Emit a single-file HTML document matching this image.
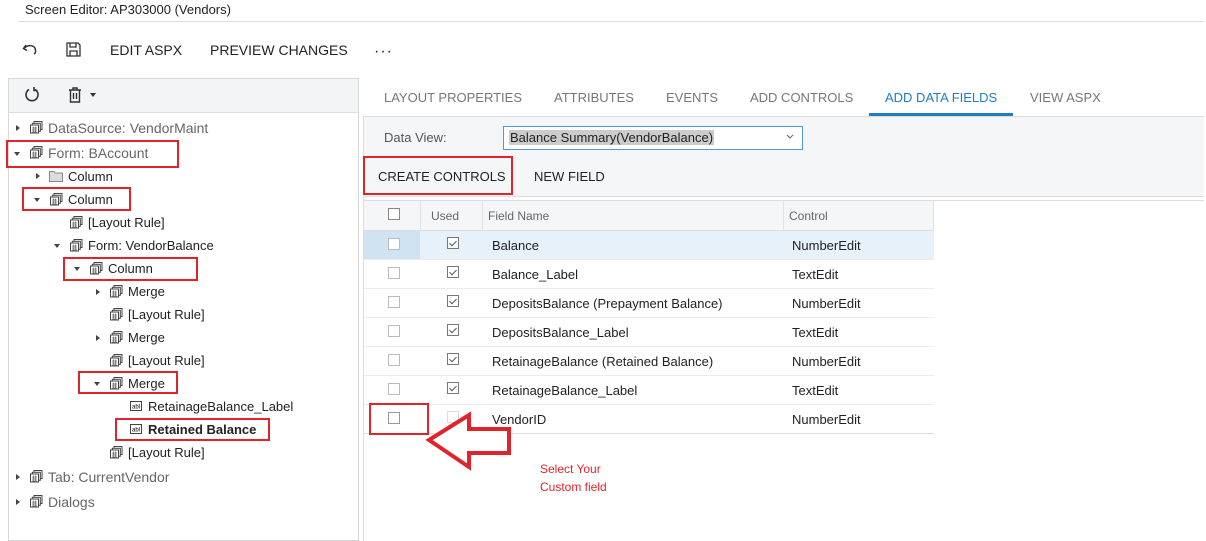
<!DOCTYPE html>
<html><head><meta charset="utf-8"><style>
*{margin:0;padding:0;box-sizing:border-box}
body{width:1206px;height:541px;background:#fff;font-family:"Liberation Sans",Arial,sans-serif;position:relative;overflow:hidden;color:#222}
.a{position:absolute;white-space:nowrap}
.red{position:absolute;border:2px solid #e0242b}
.t{font-size:13px;color:#222}
.tg{font-size:14px;color:#666}
.tab{position:absolute;top:90px;font-size:13px;color:#777}
.cb{position:absolute;width:12px;height:12px;border:1px solid #bbb;background:#fff}
.ck{position:absolute;width:12px;height:12px;border:1px solid #777;background:#fff}
.ck:after{content:"";position:absolute;left:3px;top:1px;width:3px;height:6px;border:solid #555;border-width:0 1.3px 1.3px 0;transform:rotate(45deg)}
.row{position:absolute;left:364px;width:570px;height:29px;border-bottom:1px solid #e8ecef;font-size:13px}
.tri{position:absolute;width:0;height:0}
.tr{border-top:3.5px solid transparent;border-bottom:3.5px solid transparent;border-left:4px solid #444}
.td{border-left:3.5px solid transparent;border-right:3.5px solid transparent;border-top:4px solid #444}
</style></head><body>
<div class="a" style="left:25px;top:2px;font-size:13px;color:#222">Screen Editor: AP303000 (Vendors)</div>
<div class="a" style="left:18px;top:21px;width:1186px;height:1px;background:#ddd"></div>
<svg class="a" style="left:22px;top:42px" width="16" height="14" viewBox="0 0 16 14"><path d="M4 3 L1.5 6.5 L5 8.5 M2 6.5 C6 2 13 3 13.5 8 C13.8 10 13 11.5 12 12" fill="none" stroke="#333" stroke-width="1.5"/></svg>
<svg class="a" style="left:66px;top:42px" width="15" height="15" viewBox="0 0 15 15"><path d="M1 1H12L14 3V14H1Z M4 1V5H10V1 M4 14V9H11V14" fill="none" stroke="#333" stroke-width="1.3"/></svg>
<div class="a" style="left:110px;top:42px;font-size:14px">EDIT ASPX</div>
<div class="a" style="left:210px;top:42px;font-size:14px">PREVIEW CHANGES</div>
<div class="a" style="left:374px;top:43px;font-size:16px;letter-spacing:1px">···</div>

<div class="a" style="left:8px;top:78px;width:351px;height:463px;border:1px solid #d8d8d8"></div>
<div class="a" style="left:9px;top:79px;width:349px;height:34px;background:#f3f4f5;border-bottom:1px solid #ddd"></div>
<svg class="a" style="left:24px;top:86px" width="16" height="17" viewBox="0 0 16 17"><path d="M5 3.5 A6 6 0 1 0 11 3.5 M10 1 V4.5 H13.5" fill="none" stroke="#333" stroke-width="1.6"/></svg>
<svg class="a" style="left:68px;top:87px" width="14" height="16" viewBox="0 0 14 16"><path d="M1 3H13 M5 3V1H9V3 M2.5 3V15H11.5V3 M5.5 6V12 M8.5 6V12" fill="none" stroke="#333" stroke-width="1.4"/></svg>
<div class="tri td" style="left:90px;top:93px;border-top-color:#333"></div>

<svg width="0" height="0" style="position:absolute"><defs><symbol id="w" viewBox="0 0 13 13"><rect x="4" y="0.5" width="8" height="8" fill="#fff" stroke="#444"/><rect x="2.3" y="2.3" width="8" height="8" fill="#fff" stroke="#444"/><rect x="0.5" y="4" width="8" height="8" fill="#fff" stroke="#444"/><path d="M2 7H7 M2 9H7 M2 11H7 M3.5 5.5V12 M5.5 5.5V12" stroke="#666" stroke-width="0.7"/></symbol>
<symbol id="b" viewBox="0 0 12 10"><rect x="0.5" y="0.5" width="11" height="9" fill="#fff" stroke="#444"/><text x="6" y="7.5" font-size="6" text-anchor="middle" font-family="Liberation Sans">abl</text></symbol></defs></svg>

<div class="tri tr" style="left:16px;top:125px"></div><svg class="a" style="left:30px;top:121px" width="13" height="13"><use href="#w"/></svg><div class="a tg" style="left:48px;top:120px">DataSource: VendorMaint</div>
<div class="tri td" style="left:14px;top:152px"></div><svg class="a" style="left:30px;top:146px" width="13" height="13"><use href="#w"/></svg><div class="a tg" style="left:48px;top:145px">Form: BAccount</div>
<div class="tri tr" style="left:36px;top:173px"></div><svg class="a" style="left:49px;top:170px" width="14" height="12" viewBox="0 0 14 12"><path d="M0.5 2V11.5H13.5V3H6L5 1.5H0.5Z" fill="#ddd" stroke="#888"/></svg><div class="a t" style="left:68px;top:169px">Column</div>
<div class="tri td" style="left:34px;top:198px"></div><svg class="a" style="left:50px;top:193px" width="13" height="13"><use href="#w"/></svg><div class="a t" style="left:68px;top:192px">Column</div>
<svg class="a" style="left:70px;top:216px" width="13" height="13"><use href="#w"/></svg><div class="a t" style="left:88px;top:215px">[Layout Rule]</div>
<div class="tri td" style="left:54px;top:244px"></div><svg class="a" style="left:70px;top:239px" width="13" height="13"><use href="#w"/></svg><div class="a t" style="left:88px;top:238px">Form: VendorBalance</div>
<div class="tri td" style="left:74px;top:267px"></div><svg class="a" style="left:90px;top:262px" width="13" height="13"><use href="#w"/></svg><div class="a t" style="left:108px;top:261px">Column</div>
<div class="tri tr" style="left:96px;top:289px"></div><svg class="a" style="left:110px;top:285px" width="13" height="13"><use href="#w"/></svg><div class="a t" style="left:128px;top:284px">Merge</div>
<svg class="a" style="left:110px;top:308px" width="13" height="13"><use href="#w"/></svg><div class="a t" style="left:128px;top:307px">[Layout Rule]</div>
<div class="tri tr" style="left:96px;top:335px"></div><svg class="a" style="left:110px;top:331px" width="13" height="13"><use href="#w"/></svg><div class="a t" style="left:128px;top:330px">Merge</div>
<svg class="a" style="left:110px;top:354px" width="13" height="13"><use href="#w"/></svg><div class="a t" style="left:128px;top:353px">[Layout Rule]</div>
<div class="tri td" style="left:94px;top:382px"></div><svg class="a" style="left:110px;top:377px" width="13" height="13"><use href="#w"/></svg><div class="a t" style="left:128px;top:376px">Merge</div>
<svg class="a" style="left:130px;top:401px" width="12" height="10"><use href="#b"/></svg><div class="a t" style="left:148px;top:399px">RetainageBalance_Label</div>
<svg class="a" style="left:130px;top:424px" width="12" height="10"><use href="#b"/></svg><div class="a t" style="left:148px;top:422px;font-weight:bold">Retained Balance</div>
<svg class="a" style="left:110px;top:446px" width="13" height="13"><use href="#w"/></svg><div class="a t" style="left:128px;top:445px">[Layout Rule]</div>
<div class="tri tr" style="left:16px;top:474px"></div><svg class="a" style="left:30px;top:470px" width="13" height="13"><use href="#w"/></svg><div class="a tg" style="left:48px;top:469px">Tab: CurrentVendor</div>
<div class="tri tr" style="left:16px;top:499px"></div><svg class="a" style="left:30px;top:495px" width="13" height="13"><use href="#w"/></svg><div class="a tg" style="left:48px;top:494px">Dialogs</div>

<div class="red" style="left:6px;top:140px;width:173px;height:28px"></div>
<div class="red" style="left:22px;top:187px;width:109px;height:24px"></div>
<div class="red" style="left:63px;top:257px;width:135px;height:24px"></div>
<div class="red" style="left:78px;top:371px;width:100px;height:23px"></div>
<div class="red" style="left:115px;top:418px;width:155px;height:23px"></div>

<div class="a" style="left:363px;top:115px;width:1px;height:426px;background:#ddd"></div>
<div class="tab" style="left:384px">LAYOUT PROPERTIES</div>
<div class="tab" style="left:554px">ATTRIBUTES</div>
<div class="tab" style="left:666px">EVENTS</div>
<div class="tab" style="left:750px">ADD CONTROLS</div>
<div class="tab" style="left:885px;color:#1f7dc4">ADD DATA FIELDS</div>
<div class="tab" style="left:1030px">VIEW ASPX</div>
<div class="a" style="left:364px;top:116px;width:840px;height:81px;background:#f5f6f7;border-top:1px solid #ddd;border-bottom:1px solid #ddd"></div>
<div class="a" style="left:869px;top:113px;width:144px;height:3px;background:#1f7dc4"></div>
<div class="a" style="left:364px;top:200px;width:840px;height:1px;background:#ddd"></div>
<div class="a" style="left:384px;top:130px;font-size:13px;color:#555">Data View:</div>
<div class="a" style="left:503px;top:126px;width:300px;height:24px;border:1px solid #4c9ad6;background:#fff"></div>
<div class="a" style="left:509px;top:130px;font-size:13px;background:#ccc;color:#222;padding:0 1px">Balance Summary(VendorBalance)</div>
<svg class="a" style="left:786px;top:134px" width="8" height="6"><path d="M1 1L4 4L7 1" fill="none" stroke="#666"/></svg>
<div class="a" style="left:378px;top:169px;font-size:13px">CREATE CONTROLS</div>
<div class="a" style="left:534px;top:169px;font-size:13px">NEW FIELD</div>
<div class="red" style="left:363px;top:156px;width:150px;height:39px"></div>

<div class="a" style="left:364px;top:201px;width:570px;height:30px;background:#f5f6f7;border-bottom:1px solid #ddd"></div>
<div class="a" style="left:420px;top:201px;width:1px;height:30px;background:#e2e2e2"></div>
<div class="a" style="left:482px;top:201px;width:1px;height:30px;background:#e2e2e2"></div>
<div class="a" style="left:783px;top:201px;width:1px;height:30px;background:#e2e2e2"></div>
<div class="a" style="left:933px;top:201px;width:1px;height:30px;background:#e2e2e2"></div>
<div class="cb" style="left:388px;top:208px;border-color:#888"></div>
<div class="a" style="left:431px;top:209px;font-size:12px;color:#666">Used</div>
<div class="a" style="left:488px;top:209px;font-size:12px;color:#666">Field Name</div>
<div class="a" style="left:789px;top:209px;font-size:12px;color:#666">Control</div>

<div class="row" style="top:231px;background:#e6f1fa"><div class="a" style="left:0;top:0;width:56px;height:28px;background:#cfe3f3"></div></div>
<div class="row" style="top:260px"></div>
<div class="row" style="top:289px"></div>
<div class="row" style="top:318px"></div>
<div class="row" style="top:347px"></div>
<div class="row" style="top:376px"></div>
<div class="row" style="top:405px;border-bottom-color:#ddd"></div>

<div class="cb" style="left:388px;top:238px"></div><div class="ck" style="left:447px;top:237px"></div><div class="a t" style="left:492px;top:238px">Balance</div><div class="a t" style="left:792px;top:238px">NumberEdit</div>
<div class="cb" style="left:388px;top:267px"></div><div class="ck" style="left:447px;top:266px"></div><div class="a t" style="left:492px;top:267px">Balance_Label</div><div class="a t" style="left:792px;top:267px">TextEdit</div>
<div class="cb" style="left:388px;top:296px"></div><div class="ck" style="left:447px;top:295px"></div><div class="a t" style="left:492px;top:296px">DepositsBalance (Prepayment Balance)</div><div class="a t" style="left:792px;top:296px">NumberEdit</div>
<div class="cb" style="left:388px;top:325px"></div><div class="ck" style="left:447px;top:324px"></div><div class="a t" style="left:492px;top:325px">DepositsBalance_Label</div><div class="a t" style="left:792px;top:325px">TextEdit</div>
<div class="cb" style="left:388px;top:354px"></div><div class="ck" style="left:447px;top:353px"></div><div class="a t" style="left:492px;top:354px">RetainageBalance (Retained Balance)</div><div class="a t" style="left:792px;top:354px">NumberEdit</div>
<div class="cb" style="left:388px;top:383px"></div><div class="ck" style="left:447px;top:382px"></div><div class="a t" style="left:492px;top:383px">RetainageBalance_Label</div><div class="a t" style="left:792px;top:383px">TextEdit</div>
<div class="cb" style="left:388px;top:412px;border-color:#999"></div><div class="cb" style="left:447px;top:411px;border-color:#ddd"></div><div class="a t" style="left:492px;top:412px">VendorID</div><div class="a t" style="left:792px;top:412px">NumberEdit</div>

<div class="red" style="left:369px;top:403px;width:60px;height:32px"></div>
<svg class="a" style="left:420px;top:410px" width="100" height="65"><path d="M9 30 L49 5 L49 19 L89 19 L89 43 L49 43 L49 57 Z" fill="#fff" stroke="#e0242b" stroke-width="4" stroke-linejoin="miter"/></svg>
<div class="a" style="left:540px;top:460px;font-size:12px;color:#e0242b;line-height:18px">Select Your<br>Custom field</div>
</body></html>
